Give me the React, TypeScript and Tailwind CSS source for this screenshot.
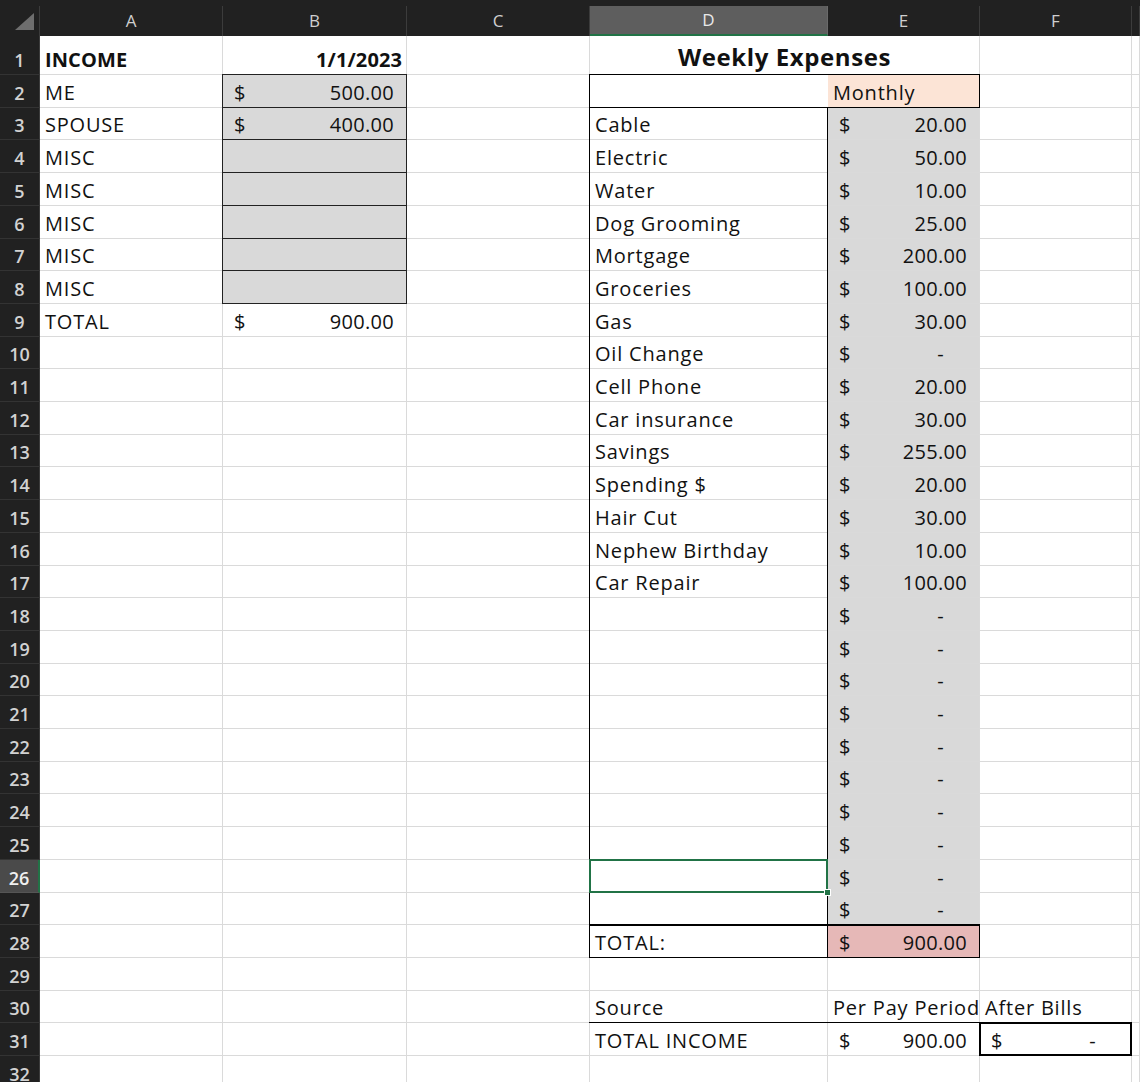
import React from 'react';

interface CellDef {
  content?: React.ReactNode;
  cls?: string; // fill, gridline colour, text alignment
  edge?: string; // drawn borders (overlay)
  selected?: boolean;
}

const COL_W = ['w-[183px]', 'w-[184px]', 'w-[183px]', 'w-[238px]', 'w-[152px]', 'w-[152px]', 'w-[8px]'];
const LETTERS = ['A', 'B', 'C', 'D', 'E', 'F', 'G'];

const GRAY = 'bg-[#d9d9d9] border-[#d9d9d9]';

const expenses: [string, string][] = [
  ['Cable', '20.00'],
  ['Electric', '50.00'],
  ['Water', '10.00'],
  ['Dog Grooming', '25.00'],
  ['Mortgage', '200.00'],
  ['Groceries', '100.00'],
  ['Gas', '30.00'],
  ['Oil Change', '-'],
  ['Cell Phone', '20.00'],
  ['Car insurance', '30.00'],
  ['Savings', '255.00'],
  ['Spending $', '20.00'],
  ['Hair Cut', '30.00'],
  ['Nephew Birthday', '10.00'],
  ['Car Repair', '100.00'],
];

function Acct({ v }: { v: string }) {
  return (
    <div className="flex w-full justify-between pl-[6px] pr-[12px] tracking-[0.3px]">
      <span>$</span>
      <span className={v === '-' ? 'pr-[23px]' : ''}>{v}</span>
    </div>
  );
}

function buildRow(r: number): CellDef[] {
  const cells: CellDef[] = Array.from({ length: 7 }, () => ({}));

  // column A
  if (r === 1) cells[0] = { content: <span className="font-bold tracking-[0.1px]">INCOME</span> };
  else if (r === 2) cells[0] = { content: 'ME' };
  else if (r === 3) cells[0] = { content: 'SPOUSE' };
  else if (r >= 4 && r <= 8) cells[0] = { content: 'MISC' };
  else if (r === 9) cells[0] = { content: 'TOTAL' };

  // column B
  if (r === 1)
    cells[1] = {
      content: <span className="font-bold tracking-[0.1px]">1/1/2023</span>,
      cls: 'justify-end pr-[4px]',
    };
  else if (r >= 2 && r <= 8) {
    cells[1] = {
      content: r === 2 ? <Acct v="500.00" /> : r === 3 ? <Acct v="400.00" /> : null,
      cls: GRAY,
      edge: 'border border-[#222]',
    };
  } else if (r === 9) cells[1] = { content: <Acct v="900.00" /> };

  // column D / E
  if (r === 2) {
    cells[3] = { edge: 'border-l border-t border-b border-black', cls: 'border-r-white' };
    cells[4] = { content: 'Monthly', cls: 'bg-[#fce4d6] border-[#fce4d6]', edge: 'border-t border-b border-r border-black' };
  } else if (r >= 3 && r <= 27) {
    const item = expenses[r - 3];
    cells[3] = {
      content: item ? item[0] : null,
      edge: 'border-l border-r border-black',
      selected: r === 26,
    };
    cells[4] = { content: <Acct v={item ? item[1] : '-'} />, cls: GRAY };
  } else if (r === 28) {
    cells[3] = { content: 'TOTAL:', edge: 'border-l border-r border-b border-t-2 border-black' };
    cells[4] = {
      content: <Acct v="900.00" />,
      cls: 'bg-[#e6b8b7] border-[#e6b8b7]',
      edge: 'border-r border-b border-t-2 border-black',
    };
  } else if (r === 30) {
    cells[3] = { content: 'Source' };
    cells[4] = { content: 'Per Pay Period', cls: 'pl-[4px] whitespace-nowrap' };
    cells[5] = { content: 'After Bills', cls: 'whitespace-nowrap' };
  } else if (r === 31) {
    cells[3] = { content: 'TOTAL INCOME', edge: 'border-t border-black' };
    cells[4] = { content: <Acct v="900.00" />, edge: 'border-t border-black' };
    cells[5] = { content: <Acct v="-" />, edge: 'border-2 border-black' };
  }

  return cells;
}

// rows 2+ are ~32.7px tall; spread the fraction over whole pixels
function rowHeight(r: number) {
  if (r === 1) return 'h-[39px]';
  const top = Math.round((r - 2) * 32.7);
  const next = Math.round((r - 1) * 32.7);
  return next - top === 33 ? 'h-[33px]' : 'h-[32px]';
}

export default function App() {
  const rows = Array.from({ length: 32 }, (_, i) => i + 1);

  return (
    <div
      className="h-[1082px] w-[1140px] overflow-hidden bg-white text-[20px] leading-[26px] tracking-[0.8px] text-[#111]"
      style={{ fontFamily: '"Open Sans", Lato, sans-serif' }}
    >
      {/* column headers */}
      <div className="flex h-[36px] bg-[#212121] pt-[6px] tracking-normal">
        <div className="flex w-[40px] shrink-0 items-end justify-end border-r border-[#3c3c3c] pr-[5px] pb-[6px]">
          <svg width="19" height="17" viewBox="0 0 19 17">
            <polygon points="19,0 19,17 0,17" fill="#6e6e6e" />
          </svg>
        </div>
        {LETTERS.map((l, i) => (
          <div
            key={l}
            className={`${COL_W[i]} flex shrink-0 items-center justify-center border-r text-[17px] ${
              l === 'D'
                ? 'border-[#6a6a6a] border-b-2 border-b-[#217346] bg-[#5e5e5e] text-[#e8e8e8]'
                : 'border-[#3c3c3c] text-[#cfcfcf]'
            }`}
          >
            {l !== 'G' && l}
          </div>
        ))}
      </div>

      {rows.map((r) => {
        const cells = buildRow(r);
        return (
          <div key={r} className={`flex ${rowHeight(r)}`}>
            <div
              className={`flex w-[40px] shrink-0 items-end justify-center border-b pb-[1px] text-[18px] font-semibold tracking-normal ${
                r === 26
                  ? 'border-[#555] border-r-2 border-r-[#217346] bg-[#4a4a4a] text-[#f0f0f0]'
                  : 'border-[#333] border-r border-r-[#3c3c3c] bg-[#212121] text-[#d2d2d2]'
              }`}
            >
              {r}
            </div>
            {r === 1 ? (
              <>
                {[0, 1, 2].map((c) => (
                  <CellBox key={c} w={COL_W[c]} cell={cells[c]} />
                ))}
                <div className="relative flex w-[390px] shrink-0 items-end justify-center border-r border-b border-[#dadada] pb-[2px] text-[24px] font-bold leading-[30px] tracking-[0.6px]">
                  Weekly Expenses
                </div>
                <CellBox w={COL_W[5]} cell={cells[5]} />
                <CellBox w={COL_W[6]} cell={cells[6]} />
              </>
            ) : (
              cells.map((cell, c) => <CellBox key={c} w={COL_W[c]} cell={cell} />)
            )}
          </div>
        );
      })}
    </div>
  );
}

function CellBox({ w, cell }: { w: string; cell: CellDef }) {
  return (
    <div
      className={`relative flex shrink-0 items-end border-r border-b border-[#dadada] pb-[1px] pl-[5px] ${w} ${cell.cls ?? ''}`}
    >
      {cell.content}
      {cell.edge && (
        <span className={`pointer-events-none absolute -top-px -right-px -bottom-px -left-px z-10 ${cell.edge}`} />
      )}
      {cell.selected && (
        <span className="pointer-events-none absolute -top-px -right-px -bottom-px -left-px z-20 border-2 border-[#217346]">
          <span className="absolute -right-[5px] -bottom-[5px] h-[7px] w-[7px] border border-white bg-[#217346]" />
        </span>
      )}
    </div>
  );
}
